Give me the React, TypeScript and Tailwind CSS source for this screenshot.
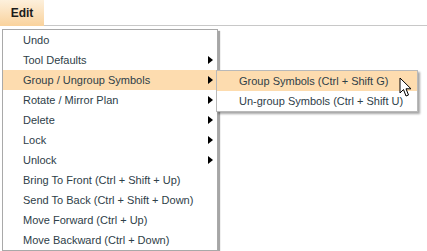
import { ReactNode } from "react";

type Item = { label: string; sub?: boolean; active?: boolean };

const items: Item[] = [
  { label: "Undo" },
  { label: "Tool Defaults", sub: true },
  { label: "Group / Ungroup Symbols", sub: true, active: true },
  { label: "Rotate / Mirror Plan", sub: true },
  { label: "Delete", sub: true },
  { label: "Lock", sub: true },
  { label: "Unlock", sub: true },
  { label: "Bring To Front (Ctrl + Shift + Up)" },
  { label: "Send To Back (Ctrl + Shift + Down)" },
  { label: "Move Forward (Ctrl + Up)" },
  { label: "Move Backward (Ctrl + Down)" },
];

function Arrow() {
  return (
    <svg width="5" height="8" viewBox="0 0 5 8" className="shrink-0">
      <path d="M0 0 L5 4 L0 8 Z" fill="#000" />
    </svg>
  );
}

function Cursor() {
  return (
    <svg width="14" height="22" viewBox="0 0 14 22" className="absolute left-[399px] top-[77px] z-20">
      <path
        d="M1 1 L1 16 L4.5 12.5 L7 19 L9.5 18 L7 11.8 L12 11.8 Z"
        fill="#fff"
        stroke="#000"
        strokeWidth="1"
        strokeLinejoin="round"
      />
    </svg>
  );
}

function Row({ children, active }: { children: ReactNode; active?: boolean }) {
  return (
    <div className={`h-[20px] flex items-center ${active ? "bg-[#fddcaf]" : ""}`}>{children}</div>
  );
}

export default function App() {
  return (
    <div
      className="relative w-[427px] h-[251px] bg-white overflow-hidden text-[11px] text-[#2e4048]"
      style={{ fontFamily: '"Liberation Sans", Arial, sans-serif' }}
    >
      <div className="flex items-end h-[26px]">
        <div className="w-[44px] h-[26px] flex items-center justify-center font-bold text-[12px] text-[#1b1b1b] bg-gradient-to-b from-[#fdf0dc] to-[#f9d29c]">
          Edit
        </div>
        <div className="flex-1 h-px bg-[#c8c8c8]" />
      </div>

      <div className="ml-[2px] mt-[3px] w-[216px] border border-[#a9a9a9] bg-white shadow-[2px_2px_1px_rgba(0,0,0,0.35)]">
        {items.map((it) => (
          <div key={it.label} className="relative">
            <Row active={it.active}>
              <span className="pl-[20px] flex-1 whitespace-nowrap">{it.label}</span>
              {it.sub && <span className="pr-[4px]"><Arrow /></span>}
            </Row>
            {it.active && (
              <div className="absolute left-[213px] top-[0px] w-[202px] border border-[#b9b9b9] bg-white shadow-[2px_2px_2px_rgba(0,0,0,0.35)] z-10">
                <Row active>
                  <span className="pl-[22px] whitespace-nowrap">Group Symbols (Ctrl + Shift G)</span>
                </Row>
                <Row>
                  <span className="pl-[22px] whitespace-nowrap">Un-group Symbols (Ctrl + Shift U)</span>
                </Row>
              </div>
            )}
          </div>
        ))}
      </div>
      <Cursor />
    </div>
  );
}
